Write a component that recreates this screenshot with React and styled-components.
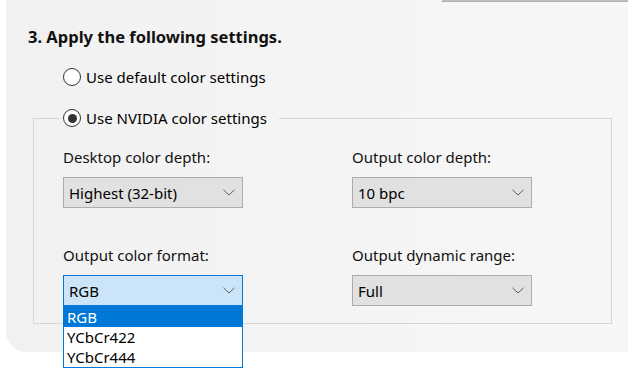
import React from "react";
import styled, { createGlobalStyle } from "styled-components";

const Global = createGlobalStyle`
  html, body { margin: 0; padding: 0; background: #ffffff; }
  body { font-family: "Noto Sans", "Open Sans", sans-serif; color: #000; }
  * { box-sizing: border-box; }
`;

const Page = styled.div`
  width: 628px;
  height: 389px;
  overflow: hidden;
  background: #ffffff;
  padding-left: 6px;
`;

const Panel = styled.div`
  position: relative;
  height: 352px;
  background: linear-gradient(to right, #f1f1f1, #f7f7f7);
  border-bottom-left-radius: 20px;
  display: flex;
  flex-direction: column;
`;

const TopBar = styled.div`
  display: flex;
  justify-content: flex-end;
  height: 2px;
`;

const CutButton = styled.div`
  width: 186px;
  height: 2px;
  background: linear-gradient(to bottom, #c9c9c9, #a9a9a9);
`;

const Heading = styled.div`
  margin: 25px 0 0 22px;
  font-size: 16.5px;
  line-height: 20px;
  font-weight: 700;
  color: #111;
`;

const RadioRow = styled.label`
  display: flex;
  align-items: center;
  gap: 5px;
  height: 20px;
  font-size: 15px;
  line-height: 20px;
  margin: ${(p) => p.$margin || "0"};
  padding: ${(p) => p.$padding || "0"};
`;

const RadioCircle = styled.span`
  width: 18px;
  height: 18px;
  border-radius: 50%;
  border: 1.5px solid #333;
  background: #fff;
  display: flex;
  align-items: center;
  justify-content: center;
  flex: none;
  &::after {
    content: "";
    width: 9px;
    height: 9px;
    border-radius: 50%;
    background: #333;
    display: ${(p) => (p.$checked ? "block" : "none")};
  }
`;

const GroupBox = styled.fieldset`
  margin: 21px 0 0 27px;
  width: 579px;
  height: 216px;
  border: 1px solid #d6d6d6;
  padding: 0;
  min-width: 0;
`;

const Legend = styled.legend`
  margin-left: 26px;
  padding: 0;
`;

const Grid = styled.div`
  display: grid;
  grid-template-columns: 289px 180px;
  row-gap: 37px;
  padding: 19px 0 0 29px;
`;

const Field = styled.div`
  position: relative;
  display: flex;
  flex-direction: column;
  gap: 10px;
`;

const Label = styled.div`
  font-size: 15px;
  line-height: 20px;
  color: #111;
`;

const Combo = styled.div`
  width: 180px;
  height: 31px;
  display: flex;
  align-items: center;
  justify-content: space-between;
  padding: 0 7px 0 5px;
  font-size: 15px;
  border: 1px solid ${(p) => (p.$focused ? "#0078d7" : "#adadad")};
  background: ${(p) => (p.$focused ? "#cce4f7" : "#e1e1e1")};
  color: #000;
`;

const Chevron = () => (
  <svg width="12" height="7" viewBox="0 0 12 7" fill="none">
    <path d="M0.5 0.8 L6 6 L11.5 0.8" stroke="#606060" strokeWidth="1" />
  </svg>
);

const List = styled.div`
  position: absolute;
  left: 0;
  top: 61px;
  width: 180px;
  background: #fff;
  border: 1px solid #0078d7;
  z-index: 2;
`;

const Item = styled.div`
  height: 20px;
  line-height: 20px;
  padding-left: 3px;
  font-size: 15px;
  background: ${(p) => (p.$active ? "#0078d7" : "transparent")};
  color: ${(p) => (p.$active ? "#fff" : "#000")};
`;

function ComboField({ label, value, focused, options }) {
  return (
    <Field>
      <Label>{label}</Label>
      <Combo $focused={focused}>
        <span>{value}</span>
        <Chevron />
      </Combo>
      {options && (
        <List>
          {options.map((o) => (
            <Item key={o} $active={o === value}>
              {o}
            </Item>
          ))}
        </List>
      )}
    </Field>
  );
}

export default function App() {
  return (
    <>
      <Global />
      <Page>
        <Panel>
          <TopBar>
            <CutButton />
          </TopBar>
          <Heading>3. Apply the following settings.</Heading>
          <RadioRow $margin="20px 0 0 57px">
            <RadioCircle />
            Use default color settings
          </RadioRow>
          <GroupBox>
            <Legend>
              <RadioRow $padding="0 12px 0 3px">
                <RadioCircle $checked />
                Use NVIDIA color settings
              </RadioRow>
            </Legend>
            <Grid>
              <ComboField label="Desktop color depth:" value="Highest (32-bit)" />
              <ComboField label="Output color depth:" value="10 bpc" />
              <ComboField
                label="Output color format:"
                value="RGB"
                focused
                options={["RGB", "YCbCr422", "YCbCr444"]}
              />
              <ComboField label="Output dynamic range:" value="Full" />
            </Grid>
          </GroupBox>
        </Panel>
      </Page>
    </>
  );
}
